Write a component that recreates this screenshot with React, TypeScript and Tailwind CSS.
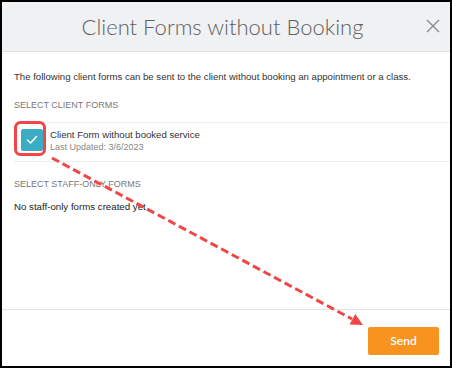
const App = () => {
  return (
    <div className="relative w-[452px] h-[368px]">
      <div className="w-full h-full border-2 border-black bg-white flex flex-col font-['Liberation_Sans',Arial,sans-serif]">
        <div className="relative h-[50px] shrink-0 bg-[#f0f1f3] border-b border-[#dfe0e3] flex items-center justify-center pr-[7px]">
          <h1 className="font-['Lato',sans-serif] text-[22px] font-light text-[#5f5f5f] leading-none">
            Client Forms without Booking
          </h1>
          <button className="absolute right-[9px] top-[16px] w-[16px] h-[16px] flex items-center justify-center">
            <svg width="14" height="14" viewBox="0 0 14 14">
              <path d="M1 1 L13 13 M13 1 L1 13" stroke="#8a8a8a" strokeWidth="1.4" fill="none" />
            </svg>
          </button>
        </div>

        <div className="flex-1 pl-3 pt-[18px]">
          <p className="text-[9.6px] leading-[14px] text-[#333]">
            The following client forms can be sent to the client without booking an appointment or a class.
          </p>
          <div className="mt-[14px] text-[9px] leading-[14px] text-[#777]">SELECT CLIENT FORMS</div>

          <div className="mt-[10px] border-y border-[#ececec] flex items-start pt-[6px] pb-[8px] pl-[7px]">
            <div className="w-[22px] h-[22px] rounded-[2px] bg-[#3aadc4] flex items-center justify-center">
              <svg width="12" height="10" viewBox="0 0 12 10">
                <path d="M1.5 5 L4.5 8 L10.5 1.5" stroke="#fff" strokeWidth="1.6" fill="none" strokeLinecap="round" strokeLinejoin="round" />
              </svg>
            </div>
            <div className="ml-[7px]">
              <div className="text-[9.6px] leading-[12px] text-[#333]">Client Form without booked service</div>
              <div className="text-[9px] leading-[12px] text-[#888]">Last Updated: 3/6/2023</div>
            </div>
          </div>

          <div className="mt-[15px] text-[9px] leading-[14px] text-[#777]">SELECT STAFF-ONLY FORMS</div>
          <div className="mt-[9px] text-[9.7px] leading-[14px] text-[#222]">No staff-only forms created yet</div>
        </div>

        <div className="h-[57px] shrink-0 border-t border-[#e3e3e3] flex justify-end pt-[17px] pr-[11px]">
          <button className="w-[71px] h-[28px] rounded-[2px] bg-[#f7931e] text-white font-['Lato',sans-serif] font-semibold text-[12px]">
            Send
          </button>
        </div>
      </div>

      <svg className="absolute top-0 left-0 pointer-events-none" width="452" height="368" viewBox="0 0 452 368">
        <rect x="15.5" y="122.5" width="29" height="32" rx="5" fill="none" stroke="#f04646" strokeWidth="3" />
        <line x1="52" y1="158" x2="352" y2="319" stroke="#f04646" strokeWidth="3" strokeDasharray="8 4" />
        <polygon points="363,325 349.6,324.6 355.2,314" fill="#f04646" />
      </svg>
    </div>
  );
};

export default App;
